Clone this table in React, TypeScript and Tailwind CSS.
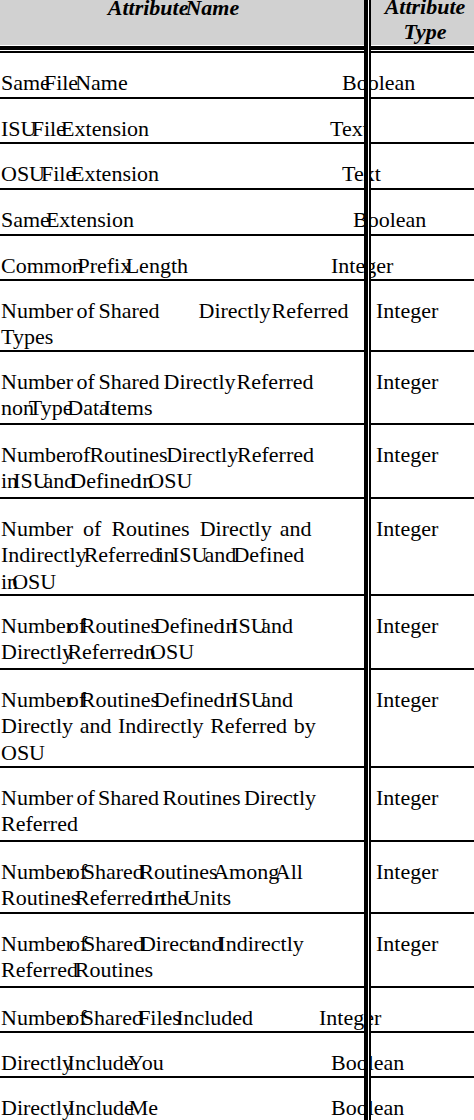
import React from 'react'

type Row = {
  lines: string[]
  type: string
  // shift pulls the type text back over the divider, as in the scanned table
  shift?: string
  h: string
}

const ROWS: Row[] = [
  { lines: ['Same{-6}File{-3}Name'], type: 'Boolean', shift: '-ml-[34px]', h: 'h-[46px]' },
  { lines: ['ISU{-4.8}File{-4.8}Extension'], type: 'Text', shift: '-ml-[46px]', h: 'h-[45px]' },
  { lines: ['OSU{-4.1}File{-4.1}Extension'], type: 'Text', shift: '-ml-[34px]', h: 'h-[46px]' },
  { lines: ['Same{-4}Extension'], type: 'Boolean', shift: '-ml-[23px]', h: 'h-[46px]' },
  { lines: ['Common{-5.5}Prefix{-5.5}Length'], type: 'Integer', shift: '-ml-[45px]', h: 'h-[45px]' },
  {
    lines: ['Number{3.5}of{3.5}Shared{39}Directly{1}Referred', 'Types'],
    type: 'Integer',
    h: 'h-[71px]',
  },
  {
    lines: ['Number{3.5}of{3.5}Shared{4}Directly{1}Referred', 'non{-5.2}Type{-5.2}Data{-5.2}Items'],
    type: 'Integer',
    h: 'h-[73px]',
  },
  {
    lines: [
      'Number{-1}of{-1}Routines{-1.5}Directly{-1.2}Referred',
      'in{-5}ISU{-5}and{-5}Defined{-5}in{-5}OSU',
    ],
    type: 'Integer',
    h: 'h-[74px]',
  },
  {
    lines: [
      'Number{10}of{10}Routines{10}Directly{8}and',
      'Indirectly{-2.9}Referred{-2.9}in{-2.9}ISU{-2.9}and{-2.9}Defined',
      'in{-6}OSU',
    ],
    type: 'Integer',
    h: 'h-[97px]',
  },
  {
    lines: [
      'Number{-5.3}of{-5.3}Routines{-5.3}Defined{-5.3}in{-5.3}ISU{-5.3}and',
      'Directly{-5.7}Referred{-5.7}in{-5.7}OSU',
    ],
    type: 'Integer',
    h: 'h-[74px]',
  },
  {
    lines: [
      'Number{-5.3}of{-5.3}Routines{-5.3}Defined{-5.3}in{-5.3}ISU{-5.3}and',
      'Directly{6.6}and{6.6}Indirectly{6.6}Referred{6.6}by',
      'OSU',
    ],
    type: 'Integer',
    h: 'h-[98px]',
  },
  {
    lines: ['Number{3.3}of{3.3}Shared{3.3}Routines{3.3}Directly', 'Referred'],
    type: 'Integer',
    h: 'h-[74px]',
  },
  {
    lines: [
      'Number{-4.4}of{-4.4}Shared{-4.4}Routines{-4.4}Among{-4.4}All',
      'Routines{-4.2}Referred{-4.2}in{-4.2}the{-4.2}Units',
    ],
    type: 'Integer',
    h: 'h-[72px]',
  },
  {
    lines: [
      'Number{-4.2}of{-4.2}Shared{-4.2}Direct{-4.2}and{-4.2}Indirectly',
      'Referred{-3.2}Routines',
    ],
    type: 'Integer',
    h: 'h-[74px]',
  },
  {
    lines: ['Number{-4.8}of{-4.8}Shared{-4.8}Files{-4.8}Included'],
    type: 'Integer',
    shift: '-ml-[57px]',
    h: 'h-[45px]',
  },
  { lines: ['Directly{-5.5}Include{-5.5}You'], type: 'Boolean', shift: '-ml-[45px]', h: 'h-[45px]' },
  { lines: ['Directly{-5.2}Include{-5.2}Me'], type: 'Boolean', shift: '-ml-[45px]', h: 'h-[45px]' },
]

// "Word{gap}Word" -> spans with the given gap (px) between them
function Words({ line }: { line: string }) {
  const parts = line.split(/\{(-?[\d.]+)\}/)
  return (
    <div className="whitespace-nowrap">
      {parts.map((p, i) =>
        i % 2 === 0 ? (
          <span key={i} style={i > 0 ? { marginLeft: `${Number(parts[i - 1])}px` } : undefined}>
            {p}
          </span>
        ) : null
      )}
    </div>
  )
}

function Divider() {
  return (
    <div className="relative z-10 flex shrink-0">
      <div className="w-1 bg-black" />
      <div className="w-px bg-white" />
      <div className="w-0.5 bg-black" />
    </div>
  )
}

function HeaderRule() {
  return (
    <>
      <div className="h-px bg-white" />
      <div className="h-1 bg-black" />
      <div className="h-px bg-white" />
      <div className="h-0.5 bg-black" />
    </>
  )
}

export default function App() {
  return (
    <div className="h-[1120px] w-[474px] overflow-hidden bg-white font-['Liberation_Serif',serif] text-[22px] text-black">
      {/* Header */}
      <div className="flex font-bold italic leading-[24.5px]">
        <div className="w-[364px] shrink-0">
          <div className="flex h-[45px] items-end justify-center bg-[#d1d1d1] pb-[25px] pr-[17px]">
            <Words line="Attribute{-3}Name" />
          </div>
          <HeaderRule />
        </div>
        <Divider />
        <div className="flex-1">
          <div className="flex h-[45px] flex-col items-center justify-end bg-[#d1d1d1] pb-px pl-[5px]">
            <div>Attribute</div>
            <div>Type</div>
          </div>
          <HeaderRule />
        </div>
      </div>

      {/* Rows */}
      {ROWS.map((row, idx) => (
        <div key={idx} className={`flex leading-[26.5px] ${row.h}`}>
          <div className="w-[364px] shrink-0 border-b-2 border-black pl-px pt-[16.5px]">
            {row.lines.map((line, i) => (
              <Words key={i} line={line} />
            ))}
          </div>
          <Divider />
          <div className="flex-1 whitespace-nowrap border-b-2 border-black pl-[5px] pt-[16.5px]">
            <span className={row.shift}>{row.type}</span>
          </div>
        </div>
      ))}
    </div>
  )
}
